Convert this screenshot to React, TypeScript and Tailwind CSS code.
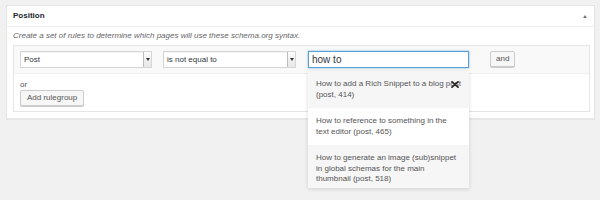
const font = { fontFamily: '"Liberation Sans", Arial, sans-serif' };

function Select({ label, width }: { label: string; width: string }) {
  return (
    <div className={`${width} h-[17px] flex items-stretch border border-[#d6d6d6] bg-white shadow-[inset_0_1px_1px_rgba(0,0,0,0.05)]`}>
      <span className="flex-1 pl-[3px] text-[8px] leading-[15px] text-[#32373c]">{label}</span>
      <span className="w-[8px] flex items-center justify-center border-l border-[#bdbdbd] bg-gradient-to-b from-[#fdfdfd] to-[#e6e6e6]">
        <span className="w-0 h-0 border-l-[2px] border-r-[2px] border-t-[3px] border-l-transparent border-r-transparent border-t-[#333]" />
      </span>
    </div>
  );
}

const results = [
  { text: 'How to add a Rich Snippet to a blog post (post, 414)', bg: 'bg-[#f6f6f6]' },
  { text: 'How to reference to something in the text editor (post, 465)', bg: 'bg-white' },
  { text: 'How to generate an image (sub)snippet in global schemas for the main thumbnail (post, 518)', bg: 'bg-[#f6f6f6]' },
];

export default function App() {
  return (
    <div style={font} className="w-[600px] h-[200px] bg-[#f1f1f1] pt-[5px] pl-[6px] pr-[5px]">
      <div className="bg-white border border-[#e5e5e5] shadow-[0_1px_1px_rgba(0,0,0,0.04)]">
        <div className="h-[21px] flex items-center justify-between pl-[6px] pr-[7px] border-b border-[#eeeeee]">
          <h2 className="text-[8px] font-bold text-[#23282d]">Position</h2>
          <span className="w-0 h-0 border-l-[2px] border-r-[2px] border-b-[3px] border-l-transparent border-r-transparent border-b-[#777]" />
        </div>
        <div className="pl-[6px] pr-[4px] pt-[4px] pb-[6px]">
          <p className="text-[8px] italic leading-[10px] text-[#666] mb-[4px]">
            Create a set of rules to determine which pages will use these schema.org syntax.
          </p>
          <div className="border border-[#e5e5e5]">
            <div className="h-[28px] bg-[#f9f9f9] border-b border-[#eeeeee] flex items-center pl-[6px]">
              <Select label="Post" width="w-[132px]" />
              <div className="w-[11px]" />
              <Select label="is not equal to" width="w-[133px]" />
              <div className="w-[12px]" />
              <div className="relative">
                <div className="w-[161px] h-[17px] border border-[#5b9dd9] bg-white shadow-[0_0_2px_rgba(30,140,190,0.6)] pl-[3px] text-[10px] leading-[15px] text-[#32373c]">
                  how to
                </div>
                <ul className="absolute left-0 top-[20px] w-[161px] h-[117px] overflow-hidden bg-white shadow-[0_1px_4px_rgba(0,0,0,0.15)] z-10">
                  {results.map((r, i) => (
                    <li key={i} className={`relative ${r.bg} px-[8px] py-[8px] text-[8px] leading-[10.5px] text-[#555]`}>
                      {r.text}
                      {i === 0 && (
                        <svg className="absolute left-[143px] top-[10px]" width="8" height="7" viewBox="0 0 8 7">
                          <path d="M1 0.8 L7 6.2 M7 0.8 L1 6.2" stroke="#2a2a2a" strokeWidth="1.8" strokeLinecap="round" />
                        </svg>
                      )}
                    </li>
                  ))}
                </ul>
              </div>
              <div className="w-[21px]" />
              <button className="-mt-[2px] h-[16px] px-[5px] bg-[#f7f7f7] border border-[#cccccc] rounded-[2px] shadow-[0_1px_0_#ccc] text-[8px] text-[#555] leading-[14px]">
                and
              </button>
            </div>
            <div className="pl-[6px] pt-[6px] pb-[5px]">
              <div className="text-[8px] leading-[10px] text-[#555]">or</div>
              <button className="block h-[16px] px-[6px] bg-[#f7f7f7] border border-[#cccccc] rounded-[2px] shadow-[0_1px_0_#ccc] text-[8px] text-[#555] leading-[14px]">
                Add rulegroup
              </button>
            </div>
          </div>
        </div>
      </div>
    </div>
  );
}
